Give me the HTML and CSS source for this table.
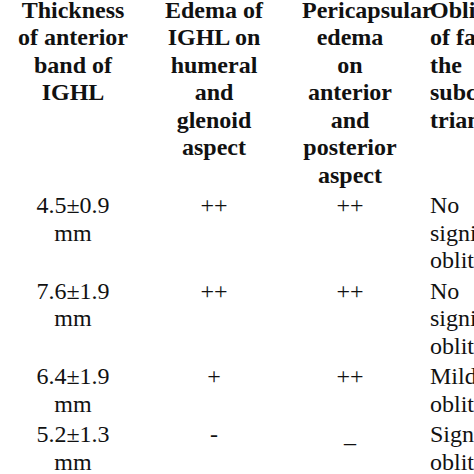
FILE: index.html
```html
<!DOCTYPE html>
<html>
<head>
<meta charset="utf-8">
<link rel="stylesheet" href="styles.css">
</head>
<body>
<table class="results">
  <colgroup>
    <col class="c1"><col class="c2"><col class="c3"><col class="c4">
  </colgroup>
  <thead>
    <tr>
      <th>Thickness<br>of anterior<br>band of<br>IGHL</th>
      <th>Edema of<br>IGHL on<br>humeral<br>and<br>glenoid<br>aspect</th>
      <th class="wide">Pericapsular<br>edema<br>on<br>anterior<br>and<br>posterior<br>aspect</th>
      <th class="last">Obliteration<br>of fat in<br>the<br>subcoracoid<br>triangle</th>
    </tr>
  </thead>
  <tbody>
    <tr>
      <td>4.5±0.9<br>mm</td>
      <td>++</td>
      <td class="wide">++</td>
      <td class="last">No<br>significant<br>obliteration</td>
    </tr>
    <tr>
      <td>7.6±1.9<br>mm</td>
      <td>++</td>
      <td class="wide">++</td>
      <td class="last">No<br>significant<br>obliteration</td>
    </tr>
    <tr>
      <td>6.4±1.9<br>mm</td>
      <td>+</td>
      <td class="wide">++</td>
      <td class="last">Mild<br>obliteration</td>
    </tr>
    <tr>
      <td>5.2±1.3<br>mm</td>
      <td>-</td>
      <td class="wide">_</td>
      <td class="last">Significant<br>obliteration</td>
    </tr>
  </tbody>
</table>
</body>
</html>
```

FILE: styles.css
```css
html, body {
  margin: 0;
  padding: 0;
  background: #ffffff;
  overflow: hidden;
  width: 474px;
  height: 474px;
}

.results {
  margin-top: -5px;
  border-collapse: separate;
  border-spacing: 0;
  table-layout: fixed;
  width: 640px;
  font-family: "Liberation Serif", "Times New Roman", serif;
  font-size: 24px;
  line-height: 27.5px;
  color: #111111;
}

.c1 { width: 146px; }
.c2 { width: 136px; }
.c3 { width: 136px; }
.c4 { width: 222px; }

.results th,
.results td {
  padding: 1.5px 16px;
  text-align: center;
  vertical-align: top;
}

.results th {
  font-weight: bold;
}

.results td {
  font-weight: normal;
}

.results .wide {
  padding-left: 20px;
  padding-right: 20px;
}

.results .last {
  text-align: left;
  padding-left: 12px;
  padding-right: 0;
}
```
